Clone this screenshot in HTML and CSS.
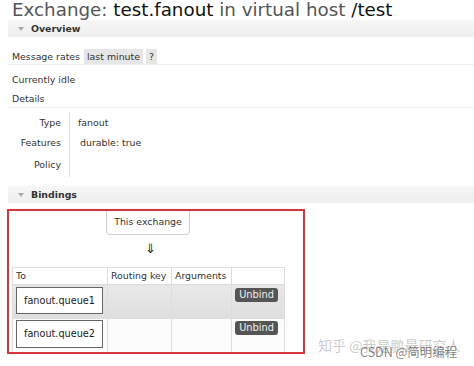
FILE: index.html
```html
<!DOCTYPE html>
<html>
<head>
<meta charset="utf-8">
<link rel="stylesheet" href="styles.css">
</head>
<body>
<div class="page">
  <h1 class="title"><span class="muted">Exchange:</span> test.fanout <span class="muted">in virtual host</span> /test</h1>
  <div class="section-head"><span class="tri"></span>Overview</div>
  <div class="rates-row">
    <span class="rates-label">Message rates</span>
    <span class="chip">last minute</span>
    <span class="chip">?</span>
  </div>
  <div class="line idle">Currently idle</div>
  <div class="line details">Details</div>
  <table class="facts">
    <tr class="r1"><th>Type</th><td>fanout</td></tr>
    <tr class="r2"><th>Features</th><td><span class="feat">durable:</span> true</td></tr>
    <tr class="r3"><th>Policy</th><td></td></tr>
  </table>
  <div class="section-head bind-head"><span class="tri"></span>Bindings</div>
  <div class="highlight">
    <div class="exch-wrap"><div class="exch">This exchange</div></div>
    <div class="arrow">⇓</div>
    <table class="bindings">
      <tr class="head">
        <th class="c1">To</th>
        <th class="c2">Routing key</th>
        <th class="c3">Arguments</th>
        <th class="c4"></th>
      </tr>
      <tr class="row odd">
        <td><div class="queue">fanout.queue1</div></td>
        <td></td>
        <td></td>
        <td><span class="btn">Unbind</span></td>
      </tr>
      <tr class="row even">
        <td><div class="queue q2">fanout.queue2</div></td>
        <td></td>
        <td></td>
        <td><span class="btn b2">Unbind</span></td>
      </tr>
    </table>
  </div>
  <div class="wm wm1">知乎 @我是鹏最研究人</div>
  <div class="wm wm2">CSDN @简明编程</div>
</div>
</body>
</html>
```
FILE: styles.css
```css
html, body {
  margin: 0;
  padding: 0;
  background: #fff;
}
body {
  font-family: "DejaVu Sans", Verdana, sans-serif;
  font-size: 9.4px;
  color: #333;
}
.page {
  position: relative;
  width: 474px;
  height: 366px;
  overflow: hidden;
}
.title {
  margin: 0 0 0 12px;
  font-size: 18.3px;
  line-height: 20px;
  font-weight: normal;
  color: #111;
  white-space: nowrap;
}
.title .muted {
  color: #555;
}
.section-head {
  margin-left: 8px;
  height: 17px;
  line-height: 17px;
  background: linear-gradient(#f6f6f6, #eeeeee);
  font-weight: bold;
  color: #333;
  display: flex;
  align-items: center;
  padding-left: 10px;
}
.tri {
  width: 0;
  height: 0;
  border-left: 3.5px solid transparent;
  border-right: 3.5px solid transparent;
  border-top: 4px solid #aaa;
  margin-right: 7px;
}
.rates-row {
  margin: 12px 0 0 8px;
  padding-left: 4px;
  height: 16px;
  border-bottom: 1px solid #eeeeee;
  display: flex;
  align-items: stretch;
  gap: 3px;
  box-sizing: border-box;
}
.rates-label {
  line-height: 15px;
  margin-right: 1px;
}
.chip {
  background: #e6e6e6;
  padding: 0 3px;
  line-height: 15px;
  color: #333;
}
.line {
  margin-left: 12px;
  height: 16px;
  line-height: 16px;
}
.idle {
  margin-top: 7px;
}
.details {
  margin-top: 3px;
  margin-left: 8px;
  padding-left: 4px;
  border-bottom: 1px solid #eeeeee;
}
.facts {
  margin: 4px 0 0 12px;
  border-collapse: collapse;
}
.facts th {
  width: 49px;
  text-align: right;
  font-weight: normal;
  padding: 0 8px 0 0;
  border-right: 1px solid #dddddd;
  color: #333;
}
.facts td {
  padding: 0 0 0 8px;
  color: #333;
}
.facts .r1 th, .facts .r1 td { height: 20px; }
.facts .r2 th, .facts .r2 td { height: 20px; }
.facts .r3 th, .facts .r3 td { height: 25px; }
.feat {
  margin-left: 2px;
}
.bind-head {
  margin-top: 9px;
}
.highlight {
  margin: 6px 0 0 7px;
  width: 298px;
  box-sizing: border-box;
  border: 2px solid #d8343c;
  padding: 0 0 0 3px;
}
.exch-wrap {
  padding-left: 94px;
}
.exch {
  display: inline-block;
  width: 84px;
  box-sizing: border-box;
  height: 24px;
  line-height: 22px;
  text-align: center;
  border: 1px solid #cfcfcf;
  border-top: none;
  border-radius: 0 0 4px 4px;
  background: #fff;
}
.arrow {
  padding-left: 133px;
  height: 32px;
  line-height: 28px;
  font-size: 13px;
  color: #222;
}
.bindings {
  border-collapse: collapse;
  table-layout: fixed;
}
.bindings th, .bindings td {
  border: 1px solid #dddddd;
  padding: 0;
  text-align: left;
  font-weight: normal;
  color: #333;
  vertical-align: top;
}
.bindings .head th {
  height: 16px;
  line-height: 16px;
  padding-left: 3px;
  background: #fff;
}
.bindings .c1 { width: 91px; }
.bindings .c2 { width: 60px; }
.bindings .c3 { width: 56px; }
.bindings .c4 { width: 49px; }
.bindings .row td {
  height: 33px;
}
.bindings .odd td {
  background: linear-gradient(#e9e9e9, #dedede);
}
.bindings .even td {
  background: #fcfcfc;
  border-bottom: none;
}
.queue {
  margin: 2px 0 0 3px;
  width: 87px;
  height: 27px;
  box-sizing: border-box;
  border: 1px solid #666;
  background: #fff;
  text-align: center;
  line-height: 25px;
  color: #222;
  font-size: 9.7px;
}
.queue.q2 {
  margin-top: 1px;
  height: 28px;
  line-height: 26px;
}
.btn {
  display: inline-block;
  margin: 3px 0 0 3px;
  width: 43px;
  height: 14px;
  line-height: 14px;
  text-align: center;
  border-radius: 3px;
  background: #555;
  color: #f0f0f0;
  font-size: 9.8px;
}
.btn.b2 {
  margin-top: 2px;
}
.wm {
  position: absolute;
  font-family: "Noto Sans CJK SC", "DejaVu Sans", sans-serif;
  white-space: nowrap;
}
.wm1 {
  left: 318px;
  top: 335px;
  font-size: 14px;
  color: rgba(170, 170, 170, 0.6);
}
.wm2 {
  left: 360px;
  top: 342px;
  font-size: 12.5px;
  color: rgba(90, 90, 90, 0.75);
}
```
